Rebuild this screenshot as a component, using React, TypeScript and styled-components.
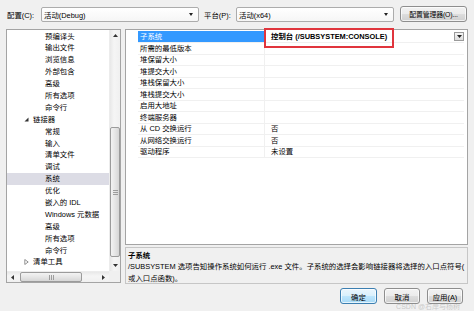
import React from "react";
import styled, { createGlobalStyle } from "styled-components";

const GlobalStyle = createGlobalStyle`
  html, body {
    margin: 0;
    padding: 0;
    background: #f0f0f0;
  }
  body {
    font-family: "Liberation Sans", "Noto Sans CJK SC", sans-serif;
    font-size: 7.4px;
    color: #000;
  }
`;

interface TreeItem {
  label: string;
  level: number;
  expander?: "open" | "closed";
  selected?: boolean;
}

const treeItems: TreeItem[] = [
  { label: "预编译头", level: 1 },
  { label: "输出文件", level: 1 },
  { label: "浏览信息", level: 1 },
  { label: "外部包含", level: 1 },
  { label: "高级", level: 1 },
  { label: "所有选项", level: 1 },
  { label: "命令行", level: 1 },
  { label: "链接器", level: 0, expander: "open" },
  { label: "常规", level: 1 },
  { label: "输入", level: 1 },
  { label: "清单文件", level: 1 },
  { label: "调试", level: 1 },
  { label: "系统", level: 1, selected: true },
  { label: "优化", level: 1 },
  { label: "嵌入的 IDL", level: 1 },
  { label: "Windows 元数据", level: 1 },
  { label: "高级", level: 1 },
  { label: "所有选项", level: 1 },
  { label: "命令行", level: 1 },
  { label: "清单工具", level: 0, expander: "closed" },
];

interface Prop {
  name: string;
  value: string;
}

const props: Prop[] = [
  { name: "子系统", value: "控制台 (/SUBSYSTEM:CONSOLE)" },
  { name: "所需的最低版本", value: "" },
  { name: "堆保留大小", value: "" },
  { name: "堆提交大小", value: "" },
  { name: "堆栈保留大小", value: "" },
  { name: "堆栈提交大小", value: "" },
  { name: "启用大地址", value: "" },
  { name: "终端服务器", value: "" },
  { name: "从 CD 交换运行", value: "否" },
  { name: "从网络交换运行", value: "否" },
  { name: "驱动程序", value: "未设置" },
];

const Dialog = styled.div`
  width: 474px;
  height: 311px;
  box-sizing: border-box;
  padding: 6px 6px 0 6px;
  display: flex;
  flex-direction: column;
  position: relative;
  overflow: hidden;
`;

const TopBar = styled.div`
  display: flex;
  align-items: center;
  height: 16px;
`;

const Label = styled.span<{ w: number; pl?: number }>`
  width: ${({ w }) => w}px;
  padding-left: ${({ pl }) => pl ?? 0}px;
  box-sizing: border-box;
  white-space: nowrap;
`;

const Combo = styled.div`
  width: 158px;
  height: 15px;
  box-sizing: border-box;
  border: 1px solid #acacac;
  border-radius: 2px;
  background: linear-gradient(#ffffff, #f6f6f6);
  display: flex;
  align-items: center;
  padding: 0 5px 0 2px;
  justify-content: space-between;
`;

const DownArrow = styled.span`
  width: 0;
  height: 0;
  border-left: 2.5px solid transparent;
  border-right: 2.5px solid transparent;
  border-top: 3px solid #222;
`;

const Button = styled.div<{ w: number; primary?: boolean; tight?: boolean }>`
  width: ${({ w }) => w}px;
  height: 16px;
  box-sizing: border-box;
  border: 1px solid ${({ primary }) => (primary ? "#3c7fb1" : "#8e8e8e")};
  border-radius: 3px;
  background: ${({ primary }) =>
    primary
      ? "linear-gradient(#eaf6fd 0%, #d9f0fc 50%, #bee6fd 51%, #a7d9f5 100%)"
      : "linear-gradient(#f2f2f2 0%, #ebebeb 50%, #dddddd 51%, #cfcfcf 100%)"};
  box-shadow: inset 0 0 0 1px rgba(255, 255, 255, 0.7);
  display: flex;
  align-items: center;
  justify-content: center;
  white-space: nowrap;
  font-size: ${({ tight }) => (tight ? "6.9px" : "inherit")};
  letter-spacing: ${({ tight }) => (tight ? "-0.15px" : "normal")};
`;

const Main = styled.div`
  display: flex;
  gap: 4px;
  margin-top: 7px;
`;

const TreePanel = styled.div`
  width: 115px;
  height: 254px;
  box-sizing: border-box;
  border: 1px solid #a4a4a4;
  background: #fff;
  display: grid;
  grid-template-columns: 1fr 11px;
  grid-template-rows: 1fr 11px;
`;

const TreeList = styled.div`
  padding-top: 0.5px;
  overflow: hidden;
`;

const TreeRow = styled.div<{ level: number; selected?: boolean }>`
  height: 11.9px;
  line-height: 11.9px;
  display: flex;
  align-items: center;
  padding-left: ${({ level }) => (level === 0 ? 17 : 38)}px;
  background: ${({ selected }) => (selected ? "#dcdce5" : "transparent")};
  white-space: nowrap;
`;

const Expander = styled.span`
  width: 9px;
  display: flex;
  align-items: center;
`;

const VScroll = styled.div`
  display: flex;
  flex-direction: column;
  background: linear-gradient(90deg, #e8e8e8, #f5f5f5 40%, #f0f0f0);
  border-left: 1px solid #ececec;
`;

const HScroll = styled.div`
  display: flex;
  align-items: stretch;
  background: linear-gradient(#e8e8e8, #f5f5f5 40%, #f0f0f0);
  border-top: 1px solid #ececec;
`;

const ArrowBox = styled.div<{ size: number }>`
  flex: 0 0 ${({ size }) => size}px;
  display: flex;
  align-items: center;
  justify-content: center;
`;

const Track = styled.div<{ horizontal?: boolean }>`
  flex: 1;
  display: flex;
  flex-direction: ${({ horizontal }) => (horizontal ? "row" : "column")};
  align-items: stretch;
`;

const Thumb = styled.div<{ vertical?: boolean }>`
  box-sizing: border-box;
  border: 1px solid #9b9b9b;
  border-radius: 2px;
  background: ${({ vertical }) =>
    vertical
      ? "linear-gradient(90deg, #f3f3f3, #e6e6e6 50%, #d6d6d6)"
      : "linear-gradient(#f3f3f3, #e6e6e6 50%, #d6d6d6)"};
  display: flex;
  align-items: center;
  justify-content: center;
`;

const Corner = styled.div`
  background: #f0f0f0;
`;

const RightCol = styled.div`
  width: 343px;
  display: flex;
  flex-direction: column;
  gap: 2px;
`;

const PropGrid = styled.div`
  height: 216px;
  box-sizing: border-box;
  border: 1px solid #a4a4a4;
  background: #fff;
  padding-top: 1.3px;
  position: relative;
`;

const PropRow = styled.div`
  display: grid;
  grid-template-columns: 12px 126px 1fr;
  height: 11.5px;
  line-height: 11px;
`;

const NameCell = styled.div<{ selected?: boolean }>`
  padding-left: 2px;
  background: ${({ selected }) => (selected ? "#3399ff" : "transparent")};
  color: ${({ selected }) => (selected ? "#fff" : "#000")};
  border-bottom: 1px solid #f0f0f0;
  white-space: nowrap;
`;

const ValueCell = styled.div<{ bold?: boolean }>`
  padding-left: 6px;
  margin-right: 3px;
  border-bottom: 1px solid #f0f0f0;
  border-left: 1px solid #f0f0f0;
  font-weight: ${({ bold }) => (bold ? 700 : 400)};
  display: flex;
  justify-content: space-between;
  align-items: center;
  white-space: nowrap;
`;

const DropBtn = styled.span`
  width: 10px;
  height: 9px;
  box-sizing: border-box;
  border: 1px solid #9a9a9a;
  background: linear-gradient(#f4f4f4, #dcdcdc);
  display: flex;
  align-items: center;
  justify-content: center;
`;

const Highlight = styled.div`
  position: absolute;
  left: 138px;
  top: -2px;
  width: 130px;
  height: 20px;
  box-sizing: border-box;
  border: 2px solid #e0353d;
`;

const Desc = styled.div`
  height: 37px;
  box-sizing: border-box;
  border: 1px solid #c6c6c6;
  background: #f0f0f0;
  padding: 1.5px 2px 0 2px;
  line-height: 11.5px;
`;

const DescTitle = styled.div`
  font-weight: 700;
`;

const Footer = styled.div`
  display: flex;
  justify-content: flex-end;
  gap: 7px;
  margin-top: 4px;
  padding-right: 5px;
`;

const Watermark = styled.div`
  position: absolute;
  right: 14px;
  bottom: 0;
  height: 8px;
  line-height: 8px;
  color: rgba(160, 160, 160, 0.5);
  font-size: 7px;
  white-space: nowrap;
`;

const Tri: React.FC<{ dir: "up" | "down" | "left" | "right"; size?: number; color?: string }> = ({
  dir,
  size = 5,
  color = "#333",
}) => {
  const pts = {
    up: "0,4 5,4 2.5,1",
    down: "0,1 5,1 2.5,4",
    left: "4,0 4,5 1,2.5",
    right: "1,0 1,5 4,2.5",
  }[dir];
  return (
    <svg width={size} height={size} viewBox="0 0 5 5">
      <polygon points={pts} fill={color} />
    </svg>
  );
};

const Grip: React.FC<{ vertical?: boolean }> = ({ vertical }) =>
  vertical ? (
    <svg width="5" height="5" viewBox="0 0 5 5">
      <path d="M0 0.5H5M0 2.5H5M0 4.5H5" stroke="#8a8a8a" strokeWidth="0.8" />
    </svg>
  ) : (
    <svg width="5" height="5" viewBox="0 0 5 5">
      <path d="M0.5 0V5M2.5 0V5M4.5 0V5" stroke="#8a8a8a" strokeWidth="0.8" />
    </svg>
  );

const App: React.FC = () => {
  return (
    <Dialog>
      <GlobalStyle />
      <TopBar>
        <Label w={35} pl={1}>配置(C):</Label>
        <Combo>
          <span>活动(Debug)</span>
          <DownArrow />
        </Combo>
        <Label w={37} pl={5}>平台(P):</Label>
        <Combo>
          <span>活动(x64)</span>
          <DownArrow />
        </Combo>
        <Button w={67} tight style={{ marginLeft: 6 }}>
          配置管理器(O)...
        </Button>
      </TopBar>

      <Main>
        <TreePanel>
          <TreeList>
            {treeItems.map((t, i) => (
              <TreeRow key={i} level={t.level} selected={t.selected}>
                {t.expander && (
                  <Expander>
                    {t.expander === "open" ? (
                      <svg width="5" height="5" viewBox="0 0 5 5">
                        <polygon points="4.5,0.5 4.5,4.5 0.5,4.5" fill="#333" />
                      </svg>
                    ) : (
                      <svg width="5" height="6" viewBox="0 0 5 6">
                        <polygon points="0.8,0.5 4.2,3 0.8,5.5" fill="none" stroke="#777" strokeWidth="0.8" />
                      </svg>
                    )}
                  </Expander>
                )}
                {t.label}
              </TreeRow>
            ))}
          </TreeList>
          <VScroll>
            <ArrowBox size={11}>
              <Tri dir="up" />
            </ArrowBox>
            <Track>
              <Thumb vertical style={{ marginTop: 86, height: 130 }}>
                <Grip vertical />
              </Thumb>
            </Track>
            <ArrowBox size={11}>
              <Tri dir="down" />
            </ArrowBox>
          </VScroll>
          <HScroll>
            <ArrowBox size={11}>
              <Tri dir="left" />
            </ArrowBox>
            <Track horizontal>
              <Thumb style={{ marginLeft: 2, width: 62 }}>
                <Grip />
              </Thumb>
            </Track>
            <ArrowBox size={11}>
              <Tri dir="right" />
            </ArrowBox>
          </HScroll>
          <Corner />
        </TreePanel>

        <RightCol>
          <PropGrid>
            {props.map((p, i) => (
              <PropRow key={i}>
                <span />
                <NameCell selected={i === 0}>{p.name}</NameCell>
                <ValueCell bold={i === 0}>
                  <span>{p.value}</span>
                  {i === 0 && (
                    <DropBtn>
                      <Tri dir="down" size={5} color="#222" />
                    </DropBtn>
                  )}
                </ValueCell>
              </PropRow>
            ))}
            <Highlight />
          </PropGrid>
          <Desc>
            <DescTitle>子系统</DescTitle>
            <div>
              /SUBSYSTEM 选项告知操作系统如何运行 .exe 文件。子系统的选择会影响链接器将选择的入口点符号(
            </div>
            <div>或入口点函数)。</div>
          </Desc>
        </RightCol>
      </Main>

      <Footer>
        <Button w={37} primary>
          确定
        </Button>
        <Button w={36}>取消</Button>
        <Button w={36}>应用(A)</Button>
      </Footer>
      <Watermark>CSDN @右岸与杨树</Watermark>
    </Dialog>
  );
};

export default App;
